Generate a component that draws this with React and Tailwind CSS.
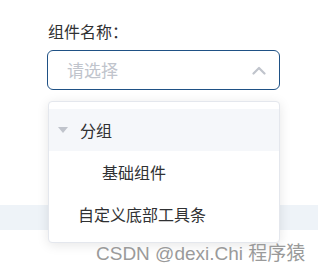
import React from 'react';

const App = () => {
  return (
    <div className="relative w-[318px] h-[270px] bg-white overflow-hidden" style={{ fontFamily: '"Noto Sans CJK SC", sans-serif' }}>
      <div className="pt-[19px] pl-[48px] text-[16px] leading-[24px] text-[#303133]">组件名称：</div>
      <div className="mt-[7px] ml-[47px] w-[233px] h-[40px] border border-[#1f5185] rounded-[6px] flex items-center justify-between pl-[19px] pr-[13px]">
        <span className="text-[17px] text-[#c0c4cc]">请选择</span>
        <svg width="14" height="9" viewBox="0 0 14 9" fill="none">
          <path d="M1.5 7.5 L7 2 L12.5 7.5" stroke="#c0c4cc" strokeWidth="2.2" strokeLinecap="round" strokeLinejoin="round" />
        </svg>
      </div>
      <div className="mt-[115px] h-[25px] bg-[#eef3f8]" />

      <div className="absolute left-[48px] top-[101px] w-[232px] h-[142px] bg-white border border-[#e4e7ed] rounded-[4px] shadow-[0_2px_12px_0_rgba(0,0,0,0.1)] py-[7px]">
        <div className="h-[42px] bg-[#f5f7fa] flex items-center pl-[9px] text-[16px] text-[#303133]">
          <svg width="10" height="6" viewBox="0 0 10 6" className="mr-[12px]">
            <path d="M0 0 L10 0 L5 6 Z" fill="#c0c4cc" />
          </svg>
          <span>分组</span>
        </div>
        <div className="h-[42px] flex items-center pl-[53px] text-[16px] text-[#303133]">基础组件</div>
        <div className="h-[42px] flex items-center pl-[29px] text-[16px] text-[#303133]">自定义底部工具条</div>
      </div>

      <div
        className="absolute left-[96px] top-[243px] text-[19px] leading-[22px] text-[#9a9a9a] whitespace-nowrap"
        style={{ fontFamily: '"Liberation Sans", "Noto Sans CJK SC", sans-serif' }}
      >
        CSDN @dexi.Chi 程序猿
      </div>
    </div>
  );
};

export default App;
